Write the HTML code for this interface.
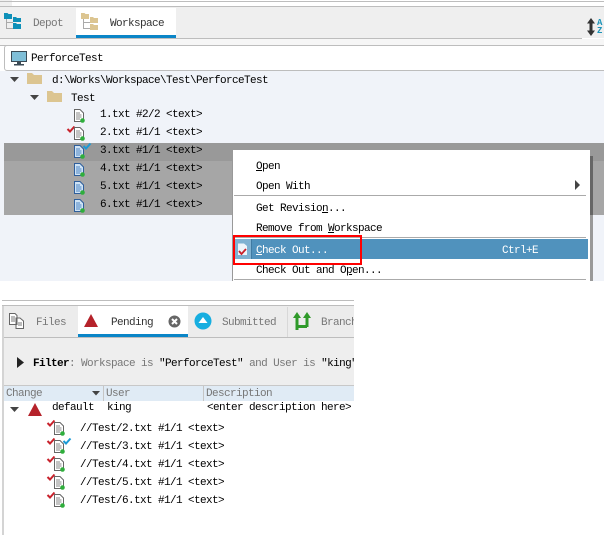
<!DOCTYPE html>
<html><head><meta charset="utf-8">
<style>
html,body{margin:0;padding:0;background:#fff}
body{width:604px;height:535px;position:relative;overflow:hidden;font-family:"Liberation Mono","Noto Sans CJK SC",monospace;font-size:11px;letter-spacing:-.6px;color:#000}
.b{position:absolute}
.t{position:absolute;white-space:pre;line-height:14px;height:14px;margin-top:1px}
.g{color:#777}
u{text-decoration:underline}
svg{position:absolute;overflow:visible}
</style></head><body>
<svg width="0" height="0" style="position:absolute">
<defs>
<g id="gf"><path d="M.5 .5H6L9.500 4V12.500H.5Z" fill="#fff" stroke="#666"/><path d="M2 4H6M2 6H7.500M2 8H7.500M2 10H6" stroke="#888"/><circle cx="8.500" cy="11.500" r="2.300" fill="#2fae3c"/></g>
<g id="bf"><path d="M.5 .5H6L9.500 4V12.500H.5Z" fill="#cfe3f5" stroke="#2f5f9c"/><path d="M2 4H6M2 6H7.500M2 8H7.500M2 10H6" stroke="#4d86c4"/><circle cx="8.500" cy="11.500" r="2.300" fill="#2fae3c"/></g>
<path id="rc" d="M.5 3L3 5.500L7.500 .5" fill="none" stroke="#c8222c" stroke-width="2"/>
<path id="bc" d="M.5 3L3 5.500L7.500 .5" fill="none" stroke="#1b9ad6" stroke-width="2"/>
<path id="dn" d="M0 0H9L4.500 5Z" fill="#444"/>
<path id="fo" d="M0 1H5L7 3H15V12H0Z" fill="#dcc591"/>
</defs></svg>

<!-- top toolbar -->
<div class="b" style="left:0;top:0;width:12px;height:6px;background:#efefef"></div>
<div class="b" style="left:0;top:1px;width:604px;height:1px;background:#bdbdbd"></div>
<div class="b" style="left:0;top:6px;width:604px;height:1px;background:#bdbdbd"></div>
<div class="b" style="left:0;top:7px;width:604px;height:31px;background:#efefef"></div>
<div class="b" style="left:0;top:38px;width:582px;height:1px;background:#bdbdbd"></div>
<div class="b" style="left:0;top:39px;width:604px;height:6px;background:#f6f6f6"></div>
<div class="b" style="left:0;top:45px;width:604px;height:1px;background:#bdbdbd"></div>

<!-- Depot tab -->
<svg style="left:4px;top:13px" width="18" height="17"><path d="M2.500 6V15.500H9M2.500 9.500H9" fill="none" stroke="#aaa"/><path d="M0 0H3.500L4.500 1H8V6H0ZM9 4H12L13 5H17V9H9ZM9 10H12L13 11H17V16H9Z" fill="#0e90b8"/></svg>
<div class="t g" style="left:33px;top:16px">Depot</div>
<!-- Workspace tab -->
<div class="b" style="left:76px;top:8px;width:100px;height:27px;background:#fff"></div>
<div class="b" style="left:76px;top:35px;width:100px;height:3px;background:#0a85c7"></div>
<svg style="left:81px;top:13px" width="18" height="17"><path d="M2.500 6V15.500H9M2.500 9.500H9" fill="none" stroke="#aaa"/><path d="M0 0H3.500L4.500 1H8V6H0ZM9 4H12L13 5H17V10H9ZM9 11H12L13 12H17V17H9Z" fill="#dcc591"/></svg>
<div class="t" style="left:110px;top:16px;color:#333">Workspace</div>
<!-- sort icon -->
<svg style="left:587px;top:18px" width="9" height="18"><path d="M4 0L8 5.500H5.500V12.500H8L4 18L0 12.500H2.500V5.500H0Z" fill="#333"/></svg>
<div class="t" style="left:597px;top:18px;font-size:9px;line-height:9px;height:9px;font-weight:bold;color:#1b93b8;letter-spacing:0">A</div>
<div class="t" style="left:597px;top:26px;font-size:9px;line-height:9px;height:9px;font-weight:bold;color:#1b93b8;letter-spacing:0">Z</div>

<!-- path box -->
<div class="b" style="left:4px;top:45px;width:604px;height:26px;background:#fff;border:1px solid #bdbdbd;border-radius:3px;box-sizing:border-box"></div>
<svg style="left:11px;top:51px" width="16" height="15"><rect x="0.5" y="0.5" width="15" height="10" fill="#7fbfd8" stroke="#3a4a55"/><rect x="6" y="11" width="4" height="2" fill="#3a4a55"/><rect x="3" y="13" width="10" height="1.5" fill="#3a4a55"/></svg>
<div class="t" style="left:31px;top:51px">PerforceTest</div>

<!-- tree -->
<div class="b" style="left:0;top:71px;width:604px;height:210px;background:#f0f3f9"></div>
<svg style="left:10px;top:77px" width="9" height="6"><use href="#dn"/></svg>
<svg style="left:27px;top:72px" width="15" height="13"><use href="#fo"/></svg>
<div class="t" style="left:52px;top:73px">d:\Works\Workspace\Test\PerforceTest</div>
<svg style="left:30px;top:95px" width="9" height="6"><use href="#dn"/></svg>
<svg style="left:47px;top:90px" width="15" height="13"><use href="#fo"/></svg>
<div class="t" style="left:71px;top:91px">Test</div>

<div class="b" style="left:4px;top:143px;width:600px;height:18px;background:#999"></div>
<div class="b" style="left:4px;top:161px;width:600px;height:54px;background:#a6a6a6"></div>

<svg style="left:74px;top:109px" width="12" height="14"><use href="#gf"/></svg>
<div class="t" style="left:100px;top:107px">1.txt #2/2 &lt;text&gt;</div>
<svg style="left:67px;top:126px" width="8" height="6"><use href="#rc"/></svg>
<svg style="left:74px;top:127px" width="12" height="14"><use href="#gf"/></svg>
<div class="t" style="left:100px;top:125px">2.txt #1/1 &lt;text&gt;</div>
<svg style="left:74px;top:145px" width="12" height="14"><use href="#bf"/></svg>
<svg style="left:83px;top:143px" width="8" height="6"><use href="#bc"/></svg>
<div class="t" style="left:100px;top:143px">3.txt #1/1 &lt;text&gt;</div>
<svg style="left:74px;top:163px" width="12" height="14"><use href="#bf"/></svg>
<div class="t" style="left:100px;top:161px">4.txt #1/1 &lt;text&gt;</div>
<svg style="left:74px;top:181px" width="12" height="14"><use href="#bf"/></svg>
<div class="t" style="left:100px;top:179px">5.txt #1/1 &lt;text&gt;</div>
<svg style="left:74px;top:199px" width="12" height="14"><use href="#bf"/></svg>
<div class="t" style="left:100px;top:197px">6.txt #1/1 &lt;text&gt;</div>

<!-- context menu -->
<div class="b" style="left:590px;top:156px;width:3px;height:59px;background:#666"></div>
<div class="b" style="left:590px;top:215px;width:3px;height:66px;background:#999"></div>
<div class="b" style="left:232px;top:150px;width:358px;height:131px;background:#fff;border-left:1px solid #999;box-sizing:border-box"></div>
<div class="t" style="left:256px;top:159px"><u>O</u>pen</div>
<div class="t" style="left:256px;top:179px">Open With</div>
<svg style="left:575px;top:180px" width="5" height="10"><path d="M0 0L5 5L0 10Z" fill="#444"/></svg>
<div class="b" style="left:234px;top:195px;width:352px;height:1px;background:#aaa"></div>
<div class="t" style="left:256px;top:201px">Get Revisio<u>n</u>...</div>
<div class="t" style="left:256px;top:221px">Remove from <u>W</u>orkspace</div>
<div class="b" style="left:234px;top:237px;width:352px;height:1px;background:#aaa"></div>
<div class="b" style="left:234px;top:239px;width:354px;height:20px;background:#5092bd"></div>
<div class="b" style="left:235px;top:239px;width:17px;height:20px;background:#7fb2d2;border-right:1px solid #3f7aa2;box-sizing:border-box"></div>
<svg style="left:237px;top:243px" width="12" height="13"><path d="M1 .5H7L10 3V12H1Z" fill="#eef5fa"/><path d="M2 8L4.500 11L9 6" fill="none" stroke="#c8222c" stroke-width="1.800"/></svg>
<div class="t" style="left:256px;top:243px;color:#fff"><u>C</u>heck Out...</div>
<div class="t" style="left:502px;top:243px;color:#fff">Ctrl+E</div>
<div class="t" style="left:256px;top:263px">Check Out and O<u>p</u>en...</div>
<div class="b" style="left:234px;top:279px;width:352px;height:1px;background:#aaa"></div>
<div class="b" style="left:233px;top:235px;width:129px;height:30px;border:2px solid #f00;box-sizing:border-box"></div>

<!-- lower panel -->
<div class="b" style="left:2px;top:300px;width:352px;height:1px;background:#bdbdbd"></div>
<div class="b" style="left:2px;top:305px;width:352px;height:1px;background:#bdbdbd"></div>
<div class="b" style="left:3px;top:306px;width:351px;height:31px;background:#ececec"></div>
<div class="b" style="left:2px;top:337px;width:352px;height:1px;background:#bdbdbd"></div>
<div class="b" style="left:2px;top:338px;width:352px;height:47px;background:#eee"></div>
<div class="b" style="left:2px;top:306px;width:2px;height:229px;background:#d4d4d4"></div>

<svg style="left:9px;top:313px" width="15" height="16"><path d="M.5 .5H6L8 2.500V11.500H.5ZM7 5H11L14.500 8V15.500H7Z" fill="#fff" stroke="#666"/><path d="M2 4H6M2 6H6M2 8H6M9 10H13M9 12H13" stroke="#777"/></svg>
<div class="t g" style="left:36px;top:315px">Files</div>
<div class="b" style="left:78px;top:306px;width:110px;height:28px;background:#fff"></div>
<div class="b" style="left:78px;top:334px;width:110px;height:3px;background:#0a85c7"></div>
<svg style="left:84px;top:314px" width="14" height="13"><path d="M7 0L14 13H0Z" fill="#b5222a"/></svg>
<div class="t" style="left:111px;top:315px;color:#333">Pending</div>
<svg style="left:168px;top:315px" width="13" height="13"><circle cx="6.500" cy="6.500" r="6" fill="#666"/><path d="M4 4L9 9M9 4L4 9" stroke="#fff" stroke-width="2"/></svg>
<svg style="left:194px;top:312px" width="18" height="18"><circle cx="9" cy="9" r="8.500" fill="#17aee0"/><path d="M9 5L13.500 11H4.500Z" fill="#fff"/></svg>
<div class="t g" style="left:222px;top:315px">Submitted</div>
<div class="b" style="left:287px;top:307px;width:1px;height:30px;background:#d8d8d8"></div>
<svg style="left:293px;top:312px" width="19" height="18"><path d="M4 18V4M14 15V4M4 14.500H14" fill="none" stroke="#2f9a2a" stroke-width="3"/><path d="M0 6L4 0L8 6ZM10 6L14 0L18 6Z" fill="#2f9a2a"/></svg>
<div class="t g" style="left:321px;top:315px;width:33px;overflow:hidden">Branch</div>

<svg style="left:17px;top:357px" width="7" height="11"><path d="M0 0L7 5.500L0 11Z" fill="#222"/></svg>
<div class="t" style="left:33px;top:356px;width:321px;overflow:hidden"><b>Filter</b><span class="g">: Workspace is </span><span>"PerforceTest"</span><span class="g"> and User is </span><span>"king"</span></div>

<div class="b" style="left:4px;top:385px;width:350px;height:1px;background:#c8c8c8"></div>
<div class="b" style="left:4px;top:386px;width:350px;height:15px;background:#e0ebf5"></div>
<div class="b" style="left:103px;top:386px;width:1px;height:15px;background:#c5c5c5"></div>
<div class="b" style="left:203px;top:386px;width:1px;height:15px;background:#c5c5c5"></div>
<div class="t g" style="left:6px;top:386px">Change</div>
<svg style="left:92px;top:391px" width="8" height="5"><path d="M0 0H8L4 4.500Z" fill="#444"/></svg>
<div class="t g" style="left:106px;top:386px">User</div>
<div class="t g" style="left:206px;top:386px">Description</div>

<svg style="left:10px;top:407px" width="9" height="6"><use href="#dn"/></svg>
<svg style="left:28px;top:403px" width="14" height="13"><path d="M7 0L14 13H0Z" fill="#b5222a"/></svg>
<div class="t" style="left:52px;top:400px">default</div>
<div class="t" style="left:107px;top:400px">king</div>
<div class="t" style="left:207px;top:400px">&lt;enter description here&gt;</div>

<svg style="left:47px;top:420px" width="8" height="6"><use href="#rc"/></svg>
<svg style="left:54px;top:422px" width="12" height="14"><use href="#gf"/></svg>
<div class="t" style="left:80px;top:421px">//Test/2.txt #1/1 &lt;text&gt;</div>
<svg style="left:47px;top:438px" width="8" height="6"><use href="#rc"/></svg>
<svg style="left:54px;top:440px" width="12" height="14"><use href="#gf"/></svg>
<svg style="left:63px;top:438px" width="8" height="6"><use href="#bc"/></svg>
<div class="t" style="left:80px;top:439px">//Test/3.txt #1/1 &lt;text&gt;</div>
<svg style="left:47px;top:456px" width="8" height="6"><use href="#rc"/></svg>
<svg style="left:54px;top:458px" width="12" height="14"><use href="#gf"/></svg>
<div class="t" style="left:80px;top:457px">//Test/4.txt #1/1 &lt;text&gt;</div>
<svg style="left:47px;top:474px" width="8" height="6"><use href="#rc"/></svg>
<svg style="left:54px;top:476px" width="12" height="14"><use href="#gf"/></svg>
<div class="t" style="left:80px;top:475px">//Test/5.txt #1/1 &lt;text&gt;</div>
<svg style="left:47px;top:492px" width="8" height="6"><use href="#rc"/></svg>
<svg style="left:54px;top:494px" width="12" height="14"><use href="#gf"/></svg>
<div class="t" style="left:80px;top:493px">//Test/6.txt #1/1 &lt;text&gt;</div>
</body></html>
